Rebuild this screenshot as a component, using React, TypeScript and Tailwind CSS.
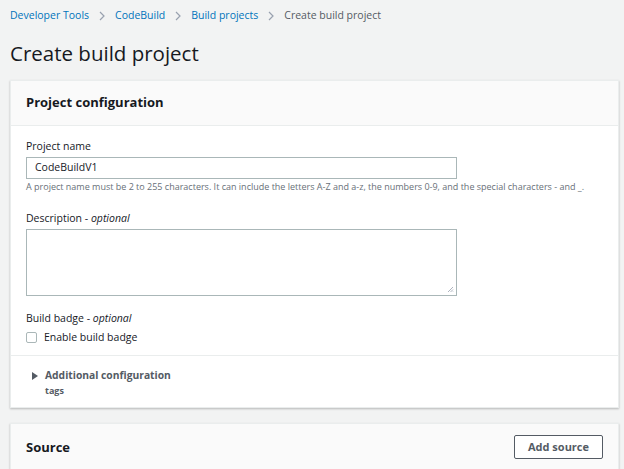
import React from 'react';

const font = { fontFamily: '"Open Sans", "Noto Sans", sans-serif' };

const Chevron = () => (
  <svg width="8" height="10" viewBox="0 0 8 10" className="mx-[9px] text-gray-400">
    <path d="M2 1l4 4-4 4" fill="none" stroke="currentColor" strokeWidth="1.2" />
  </svg>
);

export default function App() {
  return (
    <div className="w-[624px] h-[469px] overflow-hidden bg-[#f2f3f3] text-[#16191f]" style={font}>
      <div className="pl-[10px] pr-[5px]">
        {/* breadcrumbs */}
        <nav className="flex items-center h-[31px] text-[10.5px]">
          <span className="text-[#0073bb]">Developer Tools</span>
          <Chevron />
          <span className="text-[#0073bb]">CodeBuild</span>
          <Chevron />
          <span className="text-[#0073bb]">Build projects</span>
          <Chevron />
          <span className="text-[#545b64]">Create build project</span>
        </nav>

        <h1 className="text-[20.5px] leading-[28px] mt-[8px] mb-[13px]">Create build project</h1>

        {/* Project configuration */}
        <section className="bg-white border border-[#eaeded] shadow-[0_1px_2px_rgba(0,0,0,0.25)]">
          <header className="h-[45px] px-[15px] flex items-center bg-[#fafafa] border-b border-[#eaeded]">
            <h2 className="text-[13px] font-bold">Project configuration</h2>
          </header>

          <div className="px-[15px] pt-[12px]">
            <label className="block text-[10.5px] leading-[16px]">Project name</label>
            <div className="mt-[3px] w-[431px] h-[22px] border border-[#aab7b8] flex items-center px-[8px] text-[10.5px]">
              CodeBuildV1
            </div>
            <p className="mt-[1px] text-[9px] leading-[13px] text-[#687078] whitespace-nowrap">
              A project name must be 2 to 255 characters. It can include the letters A-Z and a-z, the numbers 0-9, and the special characters - and _.
            </p>

            <label className="block mt-[17px] text-[10.5px] leading-[16px]">
              Description - <i>optional</i>
            </label>
            <div className="relative mt-[3px] w-[431px] h-[67px] border border-[#aab7b8]">
              <svg width="7" height="7" viewBox="0 0 7 7" className="absolute right-[2px] bottom-[2px] text-gray-400">
                <path d="M6 1L1 6M6 3.5L3.5 6M6 5.5L5.5 6" stroke="currentColor" strokeWidth="0.8" />
              </svg>
            </div>

            <label className="block mt-[14px] text-[10.5px] leading-[16px]">
              Build badge - <i>optional</i>
            </label>
            <div className="mt-[3px] flex items-center gap-[7px] text-[10.5px] leading-[16px]">
              <span className="w-[11px] h-[11px] border border-[#aab7b8] rounded-[2px]" />
              <span>Enable build badge</span>
            </div>
          </div>

          <div className="mt-[10px] border-t border-[#eaeded] px-[20px] pt-[12px] pb-[9px]">
            <div className="flex items-center gap-[6px]">
              <svg width="8" height="8" viewBox="0 0 8 8" className="text-[#545b64]">
                <path d="M1 0L7 4L1 8Z" fill="currentColor" />
              </svg>
              <span className="text-[10.3px] font-bold text-[#545b64]">Additional configuration</span>
            </div>
            <div className="mt-[1px] pl-[14px] text-[9px] font-bold text-[#545b64] leading-[14px]">tags</div>
          </div>
        </section>

        {/* Source */}
        <section className="mt-[15px] bg-[#fafafa] border border-[#eaeded] shadow-[0_1px_2px_rgba(0,0,0,0.25)]">
          <header className="h-[46px] pl-[15px] pr-[15px] flex items-center justify-between">
            <h2 className="text-[13px] font-bold">Source</h2>
            <button className="w-[89px] h-[24px] border border-[#545b64] bg-white text-[11px] font-bold text-[#545b64] rounded-[2px]">
              Add source
            </button>
          </header>
        </section>
      </div>
    </div>
  );
}
